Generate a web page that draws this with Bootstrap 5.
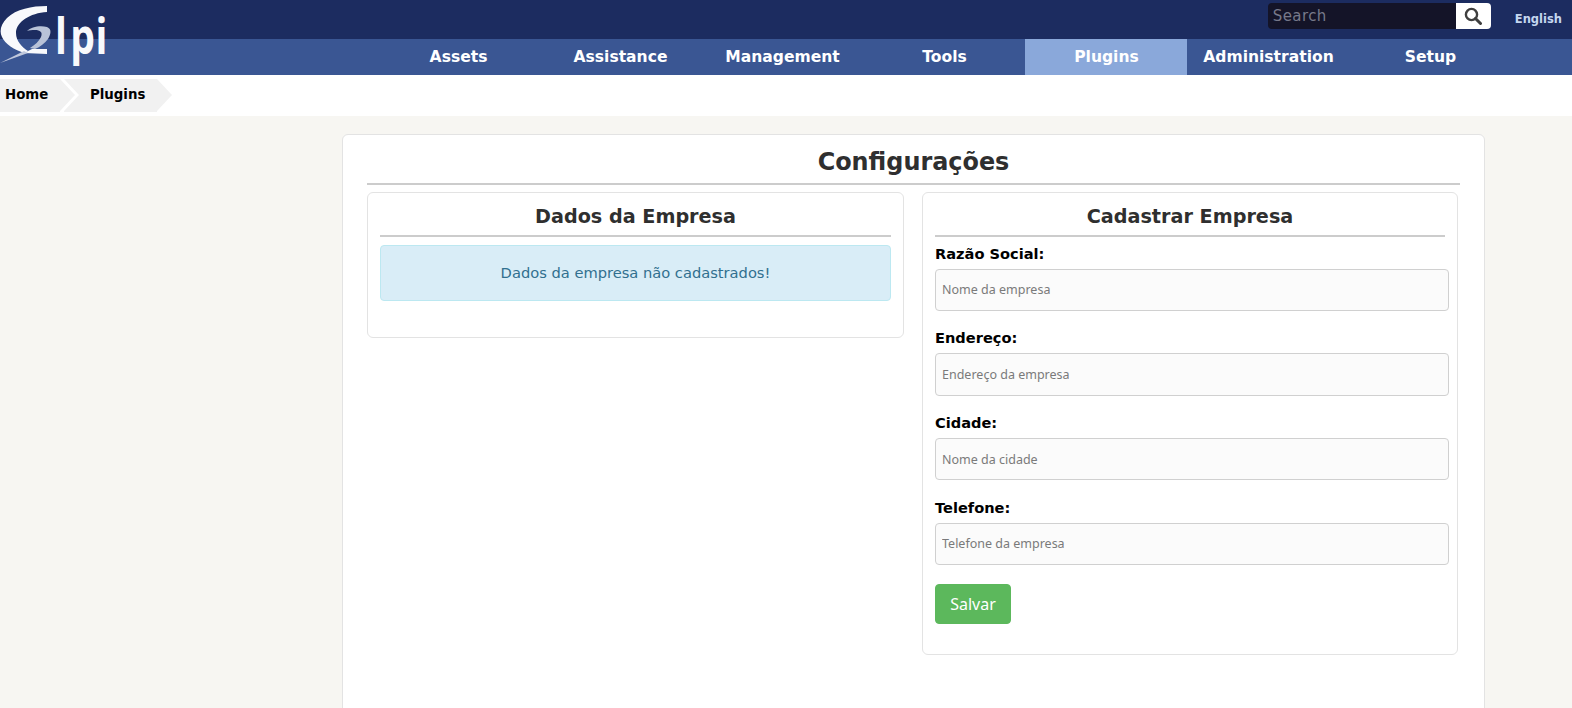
<!DOCTYPE html>
<html lang="en">
<head>
<meta charset="utf-8">
<title>GLPI - Plugins</title>
<link href="https://cdn.jsdelivr.net/npm/bootstrap@5.3.0/dist/css/bootstrap.min.css" rel="stylesheet">
<style>
html,body{height:708px;overflow:hidden}
body{background:#f7f6f2;font-family:"DejaVu Sans",sans-serif;color:#2f2f2f}
.top-head{position:relative;background:#1c2c60}
.top-bar{height:39px;padding-top:3px;padding-right:10px}
.search-box{width:223px;height:26px;border-radius:4px;overflow:hidden;margin-right:24px}
.search-box input{flex:1;min-width:0;background:#141428;border:0;outline:0;color:#fff;padding:0 5px;font:15px "DejaVu Sans",sans-serif;letter-spacing:.4px}
.search-box input::placeholder{color:#77798a;opacity:1}
.search-go{width:35px;background:#fff;border:0;padding:0;display:flex;align-items:center;justify-content:center}
.lang-link{color:#c4d6ef;font-size:11.5px;font-weight:700;text-decoration:none;margin-top:-3px}
.main-menu{height:36px;background:#3a5693;padding-left:377px}
.main-menu a{width:162px;color:#fff;font-weight:700;font-size:15.55px;text-align:center;line-height:36px;padding-left:1px;text-decoration:none}
.main-menu a.on{background:#8aa8da}
.logo-wrap{position:absolute;left:0;top:0;line-height:0}
.crumbs{height:41px;background:#fff;padding-top:4px}
.crumb-item{height:33px;background:#f1f1f1;color:#000;font-weight:700;font-size:13.33px;line-height:31px;text-decoration:none;position:relative}
.crumb-a{width:60px;padding-left:5px}
.crumb-b{width:93px;padding-left:26px;margin-left:4px}
.crumb-item::after{content:"";position:absolute;left:100%;top:0;z-index:1;border-left:15px solid #f1f1f1;border-top:16.5px solid transparent;border-bottom:16.5px solid transparent}
.crumb-b::before{content:"";position:absolute;left:0;top:0;border-left:15px solid #fff;border-top:16.5px solid transparent;border-bottom:16.5px solid transparent}
.sheet{width:1143px;height:620px;margin:18px 0 0 342px;background:#fff;border:1px solid #e3e3e3;border-radius:6px;padding:0 24px}
.sheet-title{font-size:23.9px;font-weight:700;text-align:center;line-height:54px;height:50px;margin:0;border-bottom:2px solid #ccc;color:#2f2f2f}
.pair{gap:18px;margin-top:7px}
.box{background:#fff;border:1px solid #e3e3e3;border-radius:6px;padding:0 12px}
.box-l{width:537px;height:146px}
.box-r{width:536px;height:463px;padding-right:8px}
.box-title{font-size:19.2px;font-weight:700;text-align:center;margin:0;height:44px;line-height:47px;border-bottom:2px solid #ccc;color:#2f2f2f}
.box-r .box-title{margin-right:4px}
.note{margin-top:8px;height:56px;background:#d9edf7;border:1px solid #bce8f1;border-radius:4px;color:#31708f;font-size:14.67px;text-align:center;line-height:54px}
.fld-label{display:block;color:#000;font-weight:700;font-size:14.6px;line-height:18px;margin:7.8px 0 6px}
.fld{display:block;width:100%;height:42.4px;background:#fbfbfb;border:1px solid #d0d0d0;border-radius:4px;padding:0 6px;margin-bottom:18.2px;font:12.5px "Noto Sans",sans-serif;outline:0}
.fld::placeholder{color:#7a7a7a;opacity:1}
.save-btn{width:76px;height:40px;background:#5cb85c;border:1px solid #5cb85c;border-radius:4px;color:#fff;font:16px "Noto Sans",sans-serif;padding:0;margin-top:1px}
</style>
</head>
<body>
<header class="top-head">
  <div class="top-bar d-flex justify-content-end">
    <form class="search-box d-flex">
      <input type="text" placeholder="Search" aria-label="Search">
      <button class="search-go" type="button" aria-label="Search">
        <svg width="18" height="18" viewBox="0 0 18 18" fill="none" stroke="#3f3f3f" stroke-width="2.4"><circle cx="7.5" cy="7.5" r="5.6"/><path d="M11.5 11.5 16.5 16.5" stroke-width="3" stroke-linecap="round"/></svg>
      </button>
    </form>
    <a class="lang-link align-self-center" href="#">English</a>
  </div>
  <nav class="main-menu d-flex">
    <a href="#">Assets</a><a href="#">Assistance</a><a href="#">Management</a><a href="#">Tools</a><a href="#" class="on">Plugins</a><a href="#">Administration</a><a href="#">Setup</a>
  </nav>
  <div class="logo-wrap">
    <svg width="112" height="75" viewBox="0 0 112 75">
      <path d="M47 6C32 6 16 9 7 18 1 24-1 31 2 37c3 7 12 13 23 16l3-2C22 47 16 41 16 33c0-11 14-20 31-21Z" fill="#f8f9fc"/>
      <path d="M27 31c4-4 13-6 20-4 5 2 4 7 1 12-3 4-8 8-13 10l-5-1c5-3 9-7 11-11 2-5-1-7-6-7-3 0-6 0-8 1Z" fill="#b9c3d8"/>
      <path d="M32 49 47 49 47 54 24 53Z" fill="#f8f9fc"/>
      <path d="M0 63 24 51 28 53Z" fill="#c0c8dc"/>
      <text transform="scale(.78 1)" x="70.6 90 122.6" y="54.5" font-family="Open Sans, sans-serif" font-size="50" font-weight="700" fill="#f8f9fc">lpi</text>
    </svg>
  </div>
</header>
<div class="crumbs d-flex">
  <a class="crumb-item crumb-a" href="#">Home</a>
  <a class="crumb-item crumb-b" href="#">Plugins</a>
</div>
<main class="sheet">
  <h1 class="sheet-title">Configurações</h1>
  <div class="pair d-flex align-items-start">
    <section class="box box-l">
      <h2 class="box-title">Dados da Empresa</h2>
      <div class="note">Dados da empresa não cadastrados!</div>
    </section>
    <section class="box box-r">
      <h2 class="box-title">Cadastrar Empresa</h2>
      <form>
        <label class="fld-label" for="f1">Razão Social:</label>
        <input class="fld" id="f1" placeholder="Nome da empresa">
        <label class="fld-label" for="f2">Endereço:</label>
        <input class="fld" id="f2" placeholder="Endereço da empresa">
        <label class="fld-label" for="f3">Cidade:</label>
        <input class="fld" id="f3" placeholder="Nome da cidade">
        <label class="fld-label" for="f4">Telefone:</label>
        <input class="fld" id="f4" placeholder="Telefone da empresa">
        <button class="save-btn" type="button">Salvar</button>
      </form>
    </section>
  </div>
</main>
<script src="https://cdn.jsdelivr.net/npm/bootstrap@5.3.0/dist/js/bootstrap.bundle.min.js"></script>
</body>
</html>
